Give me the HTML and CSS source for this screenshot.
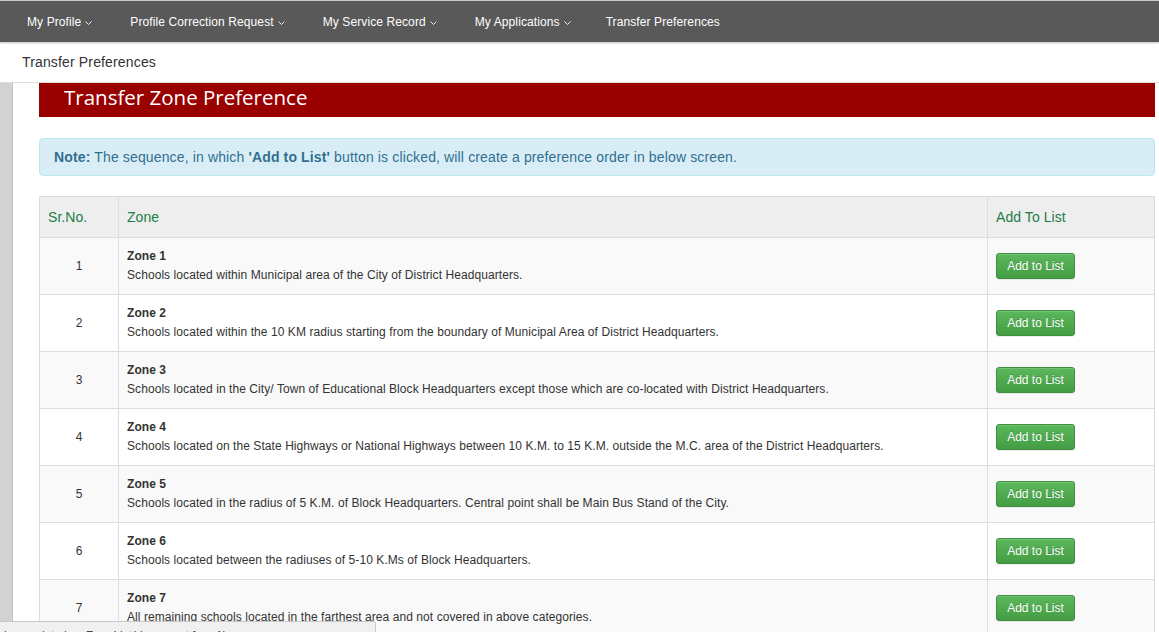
FILE: index.html
```html
<!DOCTYPE html>
<html>
<head>
<meta charset="utf-8">
<title>Transfer Preferences</title>
<link rel="stylesheet" href="styles.css">
</head>
<body>
<nav class="navbar">
  <ul class="nav">
    <li class="nav-item">My Profile <svg class="caret" viewBox="0 0 7 4" width="7" height="4"><path d="M0.5 0.5 L3.5 3.5 L6.5 0.5" fill="none" stroke="#fff" stroke-width="0.9"/></svg></li>
    <li class="nav-item">Profile Correction Request <svg class="caret" viewBox="0 0 7 4" width="7" height="4"><path d="M0.5 0.5 L3.5 3.5 L6.5 0.5" fill="none" stroke="#fff" stroke-width="0.9"/></svg></li>
    <li class="nav-item">My Service Record <svg class="caret" viewBox="0 0 7 4" width="7" height="4"><path d="M0.5 0.5 L3.5 3.5 L6.5 0.5" fill="none" stroke="#fff" stroke-width="0.9"/></svg></li>
    <li class="nav-item">My Applications <svg class="caret" viewBox="0 0 7 4" width="7" height="4"><path d="M0.5 0.5 L3.5 3.5 L6.5 0.5" fill="none" stroke="#fff" stroke-width="0.9"/></svg></li>
    <li class="nav-item">Transfer Preferences</li>
  </ul>
</nav>
<div class="crumb">Transfer Preferences</div>
<div class="page">
  <div class="side-strip"></div>
  <main class="content">
    <h1 class="zone-title">Transfer Zone Preference</h1>
    <div class="alert"><b>Note:</b> The sequence, in which <b>'Add to List'</b> button is clicked, will create a preference order in below screen.</div>
    <table class="zones">
      <thead>
        <tr><th class="c-no">Sr.No.</th><th class="c-zone">Zone</th><th class="c-add">Add To List</th></tr>
      </thead>
      <tbody>
        <tr><td class="num">1</td><td><b>Zone 1</b><br>Schools located within Municipal area of the City of District Headquarters.</td><td><button class="btn">Add to List</button></td></tr>
        <tr><td class="num">2</td><td><b>Zone 2</b><br>Schools located within the 10 KM radius starting from the boundary of Municipal Area of District Headquarters.</td><td><button class="btn">Add to List</button></td></tr>
        <tr><td class="num">3</td><td><b>Zone 3</b><br>Schools located in the City/ Town of Educational Block Headquarters except those which are co-located with District Headquarters.</td><td><button class="btn">Add to List</button></td></tr>
        <tr><td class="num">4</td><td><b>Zone 4</b><br>Schools located on the State Highways or National Highways between 10 K.M. to 15 K.M. outside the M.C. area of the District Headquarters.</td><td><button class="btn">Add to List</button></td></tr>
        <tr><td class="num">5</td><td><b>Zone 5</b><br>Schools located in the radius of 5 K.M. of Block Headquarters. Central point shall be Main Bus Stand of the City.</td><td><button class="btn">Add to List</button></td></tr>
        <tr><td class="num">6</td><td><b>Zone 6</b><br>Schools located between the radiuses of 5-10 K.Ms of Block Headquarters.</td><td><button class="btn">Add to List</button></td></tr>
        <tr><td class="num">7</td><td><b>Zone 7</b><br>All remaining schools located in the farthest area and not covered in above categories.</td><td><button class="btn">Add to List</button></td></tr>
      </tbody>
    </table>
  </main>
</div>
<div class="statusbar">javascript:showZoneList(document.form1);</div>
</body>
</html>
```

FILE: styles.css
```css
html, body {
  margin: 0;
  padding: 0;
  height: 632px;
  overflow: hidden;
  background: #fff;
  font-family: "Liberation Sans", Arial, sans-serif;
  color: #333;
}

.navbar {
  height: 41px;
  background: #595959;
  border-top: 1px solid #c8c8c8;
  box-shadow: 0 1px 2px rgba(0,0,0,0.25);
  position: relative;
  z-index: 2;
}

.nav {
  list-style: none;
  margin: 0;
  padding: 0 0 0 8px;
  display: flex;
  height: 41px;
  align-items: center;
}

.nav-item {
  color: #fff;
  font-size: 12px;
  letter-spacing: 0.1px;
  padding: 0 19px;
  white-space: nowrap;
  display: flex;
  align-items: center;
  gap: 4px;
}

.nav-item:nth-child(4) { padding-right: 17px; }
.nav-item:nth-child(5) { padding-left: 18px; }

.caret { display: block; margin-top: 2px; }

.crumb {
  height: 40px;
  line-height: 40px;
  padding-left: 22px;
  font-size: 14px;
  letter-spacing: 0.15px;
  color: #333;
  border-bottom: 1px solid #ddd;
}

.page {
  display: flex;
  align-items: stretch;
  min-height: 560px;
}

.side-strip {
  width: 12px;
  flex: none;
  background-color: #d2d2d2;
  background-image: radial-gradient(#b8b8b8 0.6px, transparent 0.7px);
  background-size: 2px 2px;
  border-right: 1px solid #c4c4c4;
}

.content {
  flex: 1;
  padding: 0 4px 0 26px;
}

.zone-title {
  margin: 0;
  height: 34px;
  line-height: 28px;
  background: #990000;
  color: #fff;
  font-family: "Open Sans", "DejaVu Sans", sans-serif;
  font-weight: normal;
  font-size: 20.5px;
  padding-left: 25px;
}

.alert {
  margin-top: 21px;
  background: #d9edf7;
  border: 1px solid #bce8f1;
  border-radius: 4px;
  color: #31708f;
  font-size: 14px;
  letter-spacing: 0.14px;
  line-height: 20px;
  padding: 8px 14px;
}

.zones {
  margin-top: 20px;
  width: 100%;
  border-collapse: collapse;
  border: 1px solid #ddd;
  font-size: 12px;
  letter-spacing: 0.07px;
}

.zones th {
  background: #eee;
  color: #1d7d46;
  font-weight: normal;
  font-size: 14px;
  text-align: left;
  line-height: 20px;
  padding: 10px 8px;
  border: 1px solid #ddd;
}

.c-no { width: 62px; }
.c-add { width: 150px; }

.zones td {
  border: 1px solid #ddd;
  padding: 9px 8px;
  line-height: 19px;
  vertical-align: middle;
}

.zones tbody tr:nth-child(odd) td { background: #f9f9f9; }

.zones td.num { text-align: center; }

.zones td b { color: #333; }

.btn {
  font-family: "Liberation Sans", Arial, sans-serif;
  font-size: 12px;
  color: #fff;
  background: linear-gradient(#5cb85c, #449d44);
  border: 1px solid #3e8f3e;
  border-radius: 3px;
  height: 26px;
  width: 79px;
  padding: 0;
  line-height: 24px;
  box-shadow: inset 0 1px 0 rgba(255,255,255,0.15), 0 1px 1px rgba(0,0,0,0.075);
  text-shadow: 0 -1px 0 rgba(0,0,0,0.2);
  display: block;
}

.statusbar {
  position: fixed;
  left: 0;
  top: 621px;
  width: 376px;
  height: 20px;
  background: #f0f0f0;
  border: 1px solid #c9c9c9;
  border-left: none;
  border-top-right-radius: 3px;
  font-size: 12px;
  line-height: 20px;
  padding: 4px 0 0 4px;
  box-sizing: border-box;
  color: #444;
  overflow: hidden;
  z-index: 5;
}
```
